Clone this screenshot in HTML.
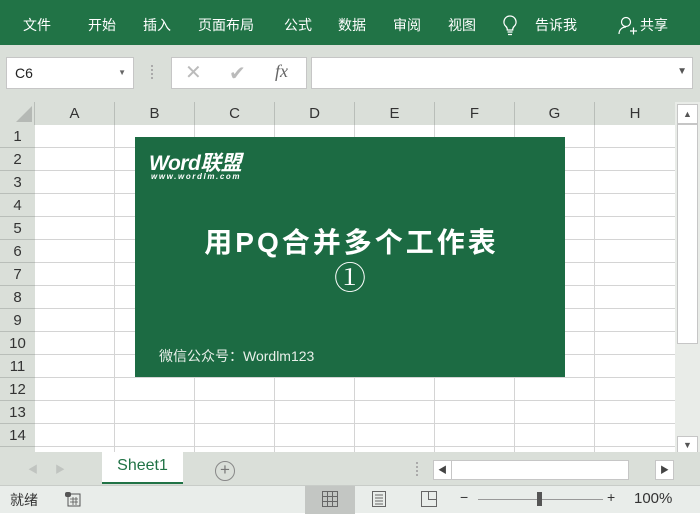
<!DOCTYPE html>
<html><head><meta charset="utf-8"><style>
*{margin:0;padding:0;box-sizing:border-box}
body{width:700px;height:513px;overflow:hidden;background:#fff;font-family:"Liberation Sans","Noto Sans CJK SC",sans-serif;position:relative}
.abs{position:absolute}
#top{left:0;top:0;width:700px;height:45px;background:#217346;color:#fff;font-size:14px}
#top span{position:absolute;top:15px}
#fb{left:0;top:45px;width:700px;height:57px;background:#dadfd9}
.box{position:absolute;background:#fff;border:1px solid #c6c6c6}
#grid{left:0;top:102px;width:675px;height:350px;background:#fff;overflow:hidden}
.ch{position:absolute;top:0;height:23px;background:#dadfd9;border-right:1px solid #b9beb9;font-size:15px;color:#333;text-align:center;line-height:24px}
.rh{position:absolute;left:0;width:35px;height:23px;background:#dadfd9;border-bottom:1px solid #b9beb9;font-size:15px;color:#333;text-align:center;line-height:23px}
.vl{position:absolute;top:23px;width:1px;height:330px;background:#d4d4d4}
.hl{position:absolute;left:35px;width:640px;height:1px;background:#d4d4d4}
</style></head><body>
<div id="top" class="abs">
<span style="left:23px">文件</span><span style="left:88px">开始</span><span style="left:143px">插入</span><span style="left:198px">页面布局</span><span style="left:284px">公式</span><span style="left:338px">数据</span><span style="left:393px">审阅</span><span style="left:448px">视图</span>
<svg style="position:absolute;left:502px;top:14px" width="16" height="22"><path d="M8 2a6 6 0 0 0-4 10.5c1 1 1.3 2 1.3 3.5h5.4c0-1.5.3-2.5 1.3-3.5A6 6 0 0 0 8 2z M5.5 18h5 M6 20.5h4" fill="none" stroke="#fff" stroke-width="1.3"/></svg>
<span style="left:535px">告诉我</span>
<svg style="position:absolute;left:618px;top:16px" width="20" height="20"><circle cx="8" cy="6" r="4.5" fill="none" stroke="#fff" stroke-width="1.2"/><path d="M1 18c0-4 3-7 7-7 M12 15h7 M15.5 11.5v7" fill="none" stroke="#fff" stroke-width="1.2"/></svg>
<span style="left:640px">共享</span>
</div>
<div id="fb" class="abs">
<div class="box" style="left:6px;top:12px;width:128px;height:32px;font-size:14px;line-height:30px;padding-left:8px;color:#222">C6<span style="position:absolute;right:7px;top:0;font-size:8px;color:#666">▼</span></div>
<div style="position:absolute;left:151px;top:20px;width:2px;height:14px;border-left:2px dotted #aaa"></div>
<div class="box" style="left:171px;top:12px;width:136px;height:32px;color:#bbb;font-size:20px">
<span style="position:absolute;left:13px;top:2px">✕</span><span style="position:absolute;left:57px;top:3px">✔</span><span style="position:absolute;left:103px;top:3px;font-family:'Liberation Serif',serif;font-style:italic;color:#666;font-size:18px">fx</span></div>
<div class="box" style="left:311px;top:12px;width:382px;height:32px"><span style="position:absolute;right:5px;top:8px;font-size:10px;color:#555">▼</span></div>
</div>
<div id="grid" class="abs">
<div class="ch" style="left:0;width:35px"><svg width="30" height="22" style="position:absolute;left:4px;top:0"><path d="M28 4L28 20L12 20Z" fill="#b5b9b5"/></svg></div>
<div class="ch" style="left:35px;width:80px">A</div><div class="ch" style="left:115px;width:80px">B</div><div class="ch" style="left:195px;width:80px">C</div><div class="ch" style="left:275px;width:80px">D</div><div class="ch" style="left:355px;width:80px">E</div><div class="ch" style="left:435px;width:80px">F</div><div class="ch" style="left:515px;width:80px">G</div><div class="ch" style="left:595px;width:80px;border-right:none">H</div>
<div class="vl" style="left:114px"></div><div class="vl" style="left:194px"></div><div class="vl" style="left:274px"></div><div class="vl" style="left:354px"></div><div class="vl" style="left:434px"></div><div class="vl" style="left:514px"></div><div class="vl" style="left:594px"></div>
<div class="rh" style="top:23px">1</div><div class="rh" style="top:46px">2</div><div class="rh" style="top:69px">3</div><div class="rh" style="top:92px">4</div><div class="rh" style="top:115px">5</div><div class="rh" style="top:138px">6</div><div class="rh" style="top:161px">7</div><div class="rh" style="top:184px">8</div><div class="rh" style="top:207px">9</div><div class="rh" style="top:230px">10</div><div class="rh" style="top:253px">11</div><div class="rh" style="top:276px">12</div><div class="rh" style="top:299px">13</div><div class="rh" style="top:322px">14</div><div class="rh" style="top:345px">15</div>
<div class="hl" style="top:45px"></div><div class="hl" style="top:68px"></div><div class="hl" style="top:91px"></div><div class="hl" style="top:114px"></div><div class="hl" style="top:137px"></div><div class="hl" style="top:160px"></div><div class="hl" style="top:183px"></div><div class="hl" style="top:206px"></div><div class="hl" style="top:229px"></div><div class="hl" style="top:252px"></div><div class="hl" style="top:275px"></div><div class="hl" style="top:298px"></div><div class="hl" style="top:321px"></div><div class="hl" style="top:344px"></div>
</div>
<div class="abs" style="left:675px;top:102px;width:25px;height:350px;background:#e9ece8">
<div class="box" style="left:2px;top:2px;width:21px;height:20px;font-size:9px;text-align:center;line-height:18px;color:#555">▲</div>
<div class="box" style="left:2px;top:22px;width:21px;height:220px"></div>
<div class="box" style="left:2px;top:334px;width:21px;height:18px;font-size:9px;text-align:center;line-height:16px;color:#555">▼</div>
</div>
<div class="abs" style="left:135px;top:137px;width:430px;height:240px;background:#1c6b43;color:#fff">
<div style="position:absolute;left:14px;top:10px;font-size:21px;font-weight:bold;font-style:italic;letter-spacing:-0.5px">Word联盟</div>
<div style="position:absolute;left:16px;top:35px;font-size:8px;font-weight:bold;font-style:italic;letter-spacing:1.6px">www.wordlm.com</div>
<div style="position:absolute;left:0;width:430px;top:84px;text-align:center;font-size:28px;font-weight:bold;letter-spacing:3px;padding-left:3px">用PQ合并多个工作表</div>
<div style="position:absolute;left:0;width:430px;top:116px;text-align:center;font-size:32px;font-family:'Liberation Serif','Noto Serif CJK SC',serif">①</div>
<div style="position:absolute;left:24px;top:209px;font-size:14px;color:#e8efe9">微信公众号：Wordlm123</div>
</div>
<div class="abs" style="left:0;top:452px;width:700px;height:33px;background:#dadfd9">
<span style="position:absolute;left:28px;top:9px;color:#c0c4c0;font-size:10px">◀</span><span style="position:absolute;left:55px;top:9px;color:#c0c4c0;font-size:10px">▶</span>
<div style="position:absolute;left:102px;top:0;width:81px;height:32px;background:#fff;border-bottom:2px solid #217346;color:#217346;font-size:16px;text-align:center;line-height:28px">Sheet1</div>
<div style="position:absolute;left:215px;top:9px;width:20px;height:20px;border:1.5px solid #888;border-radius:50%;text-align:center;line-height:16px;color:#777;font-size:17px">+</div>
<div style="position:absolute;left:416px;top:10px;height:14px;border-left:2px dotted #aaa"></div>
<div class="box" style="left:433px;top:8px;width:196px;height:20px"><div style="position:absolute;left:0;top:0;width:18px;height:18px;border-right:1px solid #c6c6c6;font-size:9px;line-height:18px;text-align:center;color:#444">◀</div></div>
<div class="box" style="left:655px;top:8px;width:19px;height:20px;font-size:9px;line-height:18px;text-align:center;color:#444">▶</div>
</div>
<div class="abs" style="left:0;top:485px;width:700px;height:28px;background:#e9edea;border-top:1px solid #c8ccc8;font-size:14px;color:#333">
<span style="position:absolute;left:10px;top:4px">就绪</span>
<svg style="position:absolute;left:65px;top:5px" width="16" height="16"><rect x="0" y="1" width="6" height="5" rx="2" fill="#555"/><rect x="3" y="3" width="12" height="12" fill="none" stroke="#555"/><path d="M5 8h8M5 11h8M8 6v8M11 6v8" stroke="#555" stroke-width="0.8"/></svg>
<div style="position:absolute;left:305px;top:0;width:50px;height:28px;background:#c3c6c3"></div>
<svg style="position:absolute;left:322px;top:5px" width="16" height="16"><path d="M.5 .5h15v15H.5zM.5 5.5h15M.5 10.5h15M5.5 .5v15M10.5 .5v15" fill="none" stroke="#666"/></svg>
<svg style="position:absolute;left:371px;top:5px" width="16" height="16"><path d="M1.5 .5h13v15h-13zM4 4h8M4 7h8M4 10h8M4 13h8" fill="none" stroke="#666"/></svg>
<svg style="position:absolute;left:421px;top:5px" width="16" height="16"><path d="M.5 .5h15v15H.5zM7.5 .5v8h8" fill="none" stroke="#666"/></svg>
<span style="position:absolute;left:460px;top:3px">−</span>
<div style="position:absolute;left:478px;top:13px;width:125px;height:1px;background:#999"></div>
<div style="position:absolute;left:537px;top:6px;width:5px;height:14px;background:#555"></div>
<span style="position:absolute;left:607px;top:3px">+</span>
<span style="position:absolute;left:634px;top:4px;font-size:15px">100%</span>
</div>
</body></html>
